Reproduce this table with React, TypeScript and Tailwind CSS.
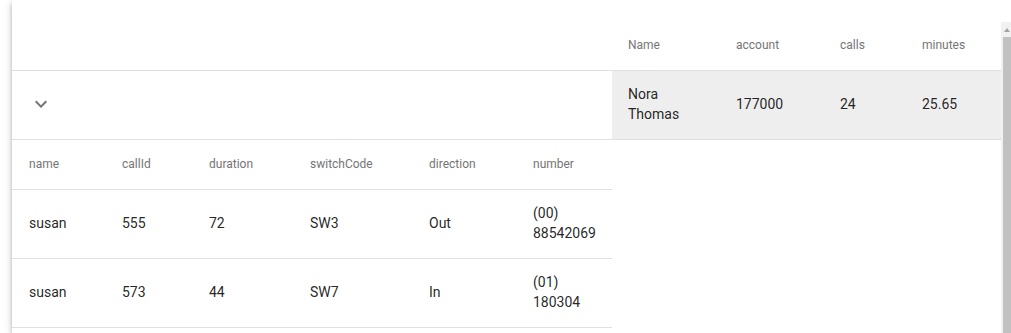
import React from "react";

const mainCols = "grid grid-cols-[600px_108px_104px_82px_95px]";
const subCols = "grid grid-cols-[93px_87px_101px_119px_104px_96px]";

const calls = [
  { name: "susan", callId: "555", duration: "72", switchCode: "SW3", direction: "Out", number: ["(00)", "88542069"] },
  { name: "susan", callId: "573", duration: "44", switchCode: "SW7", direction: "In", number: ["(01)", "180304"] },
];

const ChevronDown = () => (
  <svg viewBox="0 0 24 24" className="w-6 h-6 fill-[#757575]">
    <path d="M16.59 8.59L12 13.17 7.41 8.59 6 10l6 6 6-6z" />
  </svg>
);

const App = () => {
  return (
    <div
      className="flex h-[333px] w-[1011px] overflow-hidden bg-white text-[rgba(0,0,0,0.87)]"
      style={{ fontFamily: "Roboto, 'Liberation Sans', sans-serif" }}
    >
      <div className="ml-[12px] w-[989px] bg-white shadow-[0_2px_4px_-1px_rgba(0,0,0,0.2),0_4px_5px_0_rgba(0,0,0,0.14),0_1px_10px_0_rgba(0,0,0,0.12)]">
        {/* main header */}
        <div className={`${mainCols} h-[71px] items-end border-b border-[#e0e0e0] pb-[17px] text-[12px] leading-4 text-[#757575]`}>
          <div />
          <div className="pl-4">Name</div>
          <div className="pl-4">account</div>
          <div className="pl-4">calls</div>
          <div className="pl-4">minutes</div>
        </div>

        {/* main row */}
        <div className={`${mainCols} h-[69px] border-b border-[#e0e0e0] text-[14px] leading-5`}>
          <div className="flex items-center pl-[17px] pb-[2px]">
            <ChevronDown />
          </div>
          <div className="flex items-center bg-[#eeeeee] pl-4 pr-4 pb-[2px]">Nora Thomas</div>
          <div className="flex items-center bg-[#eeeeee] pl-4 pb-[2px]">177000</div>
          <div className="flex items-center bg-[#eeeeee] pl-4 pb-[2px]">24</div>
          <div className="flex items-center bg-[#eeeeee] pl-4 pb-[2px]">25.65</div>
        </div>

        {/* nested calls table */}
        <div className="w-[600px]">
          <div className={`${subCols} h-[50px] items-center border-b border-[#e0e0e0] pb-[2px] text-[12px] leading-4 text-[#757575]`}>
            <div className="pl-[17px]">name</div>
            <div className="pl-[17px]">callId</div>
            <div className="pl-[17px]">duration</div>
            <div className="pl-[17px]">switchCode</div>
            <div className="pl-[17px]">direction</div>
            <div className="pl-[17px]">number</div>
          </div>
          {calls.map((c, i) => (
            <div key={i} className={`${subCols} h-[69px] items-center border-b border-[#e0e0e0] pb-[2px] text-[14px] leading-5`}>
              <div className="pl-[17px]">{c.name}</div>
              <div className="pl-[17px]">{c.callId}</div>
              <div className="pl-[17px]">{c.duration}</div>
              <div className="pl-[17px]">{c.switchCode}</div>
              <div className="pl-[17px]">{c.direction}</div>
              <div className="pl-[17px]">
                <div>{c.number[0]}</div>
                <div>{c.number[1]}</div>
              </div>
            </div>
          ))}
        </div>
      </div>

      {/* scrollbar */}
      <div className="relative flex w-[10px] flex-col bg-white pt-[22px]">
        <div className="flex flex-1 flex-col bg-[#f1f1f1]">
          <div className="flex h-[15px] items-center justify-center pl-[2px]">
            <svg viewBox="0 0 6 4" className="w-[6px] h-[4px] fill-[#a3a3a3]">
              <path d="M3 0L6 4H0z" />
            </svg>
          </div>
          <div className="ml-[2px] flex-1 bg-[#c1c1c1]" />
        </div>
      </div>
    </div>
  );
};

export default App;
